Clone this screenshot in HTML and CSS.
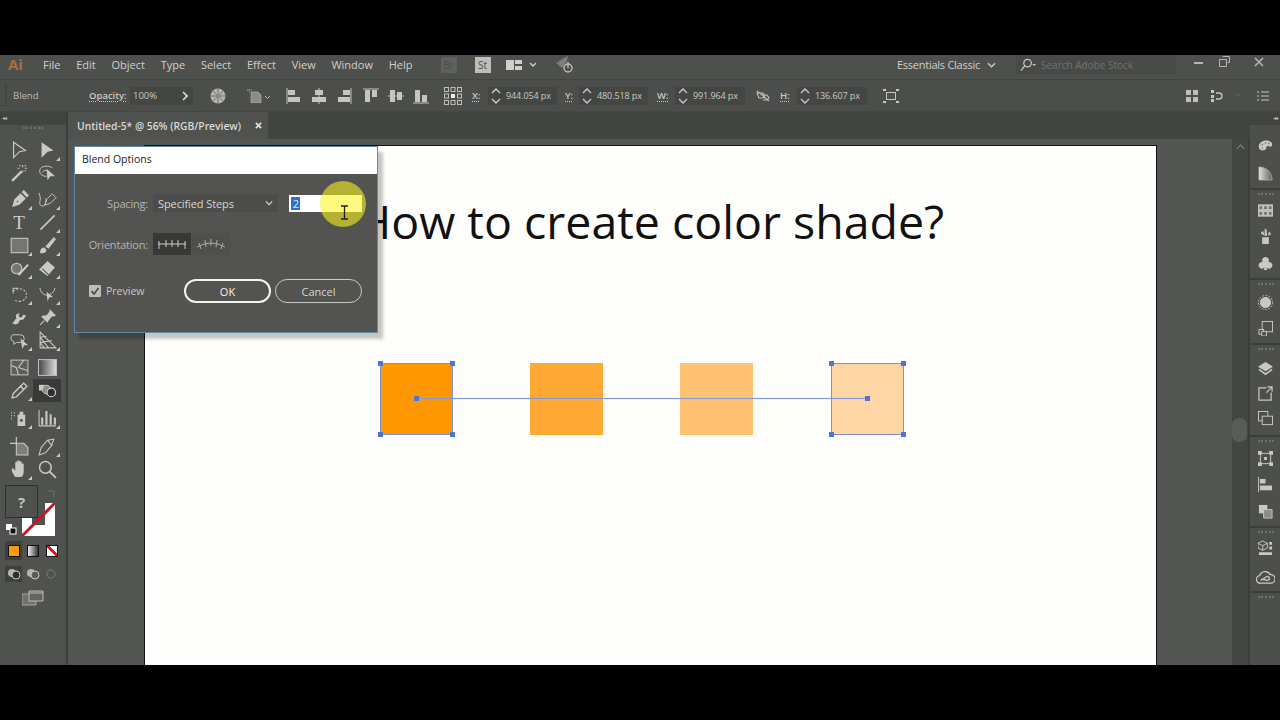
FILE: index.html
```html
<!DOCTYPE html>
<html lang="en">
<head>
<meta charset="utf-8">
<title>Adobe Illustrator - Blend Options</title>
<link rel="stylesheet" href="styles.css">
</head>
<body>
<div class="letterbox"></div>
<div class="app">
  <header class="menubar">
    <div class="logo">Ai</div>
    <nav class="menus">
      <span>File</span><span>Edit</span><span>Object</span><span>Type</span><span>Select</span><span>Effect</span><span>View</span><span>Window</span><span>Help</span>
    </nav>
    <div class="bridge">
      <span class="br">Br</span><span class="st">St</span>
      <svg class="arr" viewBox="0 0 30 12" width="30" height="12"><path d="M0 1h8v10H0zM9 1h7v4H9zM9 7h7v4H9z" fill="#cfcfcb"/><path d="M25 4l3 3 3-3" transform="translate(-1 0)" stroke="#cfcfcb" stroke-width="1.400" fill="none"/></svg>
      <svg class="rocket" viewBox="0 0 20 18" width="20" height="18"><path d="M1 7L9 2l4-2-1 5-5 7z" fill="#7c7e7a"/><circle cx="13" cy="12" r="4" fill="none" stroke="#bdbdb9" stroke-width="1.400"/><path d="M13 6v6" stroke="#bdbdb9" stroke-width="1.400"/></svg>
    </div>
    <div class="spacer"></div>
    <div class="workspace-name">Essentials Classic <svg viewBox="0 0 10 6" width="9" height="6"><path d="M1 1l4 4 4-4" stroke="#ccc" stroke-width="1.400" fill="none"/></svg></div>
    <div class="search">
      <svg viewBox="0 0 18 14" width="17" height="14"><circle cx="8" cy="5" r="4" fill="none" stroke="#c8c8c4" stroke-width="1.300"/><path d="M5 8l-4 5" stroke="#c8c8c4" stroke-width="1.400"/><path d="M13 6h4l-2 2z" fill="#c8c8c4"/></svg>
      <span>Search Adobe Stock</span>
    </div>
    <div class="winctl">
      <svg viewBox="0 0 10 10" width="10" height="10"><path d="M0 6h9" stroke="#b4b4b0" stroke-width="2"/></svg>
      <svg class="restore" viewBox="0 0 11 11" width="11" height="11"><path d="M3.500 .5h7v6h-2M.5 3.500h7v7h-7z" fill="none" stroke="#b4b4b0"/></svg>
      <svg class="close" viewBox="0 0 10 10" width="10" height="10"><path d="M1 1l8 8M9 1l-8 8" stroke="#b4b4b0" stroke-width="1.600"/></svg>
    </div>
  </header>

  <div class="controlbar">
    <svg class="grip-v" viewBox="0 0 2 22" width="2" height="22"><path d="M1 0v22" stroke="#3a3c3a" stroke-width="2" stroke-dasharray="1 1"/></svg>
    <span class="blend-label">Blend</span>
    <span class="lbl opacity">Opacity:</span>
    <span class="field opacity-val">100%</span>
    <span class="field chev"><svg viewBox="0 0 6 10" width="6" height="10"><path d="M1 1l4 4-4 4" stroke="#ddd" stroke-width="1.600" fill="none"/></svg></span>
    <svg class="c-globe" viewBox="0 0 16 16" width="16" height="16"><circle cx="8" cy="8" r="7.500" fill="#b4b4b0"/><path d="M8 1v14M1 8h14M3 3l10 10M13 3L3 13" stroke="#70726e"/><circle cx="8" cy="8" r="2" fill="#8c8e8a"/></svg>
    <svg class="c-doc" viewBox="0 0 24 14" width="24" height="14"><path d="M4 3h7l3 3v8H4z" fill="#8a8c88" stroke="#bbb" stroke-width=".6"/><path d="M0 1h5M2 0v4" stroke="#bbb" stroke-width=".8" stroke-dasharray="1 1"/><path d="M18 7l2.500 2.500L23 7" stroke="#bbb" fill="none"/></svg>
    <div class="align-group">
      <svg viewBox="0 0 16 16" width="16" height="16"><path d="M1 0v16" stroke="#c4c4c0"/><path d="M2 2h7v5H2zM2 9h12v5H2z" fill="#c4c4c0"/></svg>
      <svg viewBox="0 0 16 16" width="16" height="16"><path d="M8 0v16" stroke="#c4c4c0"/><path d="M4 2h8v5H4zM1 9h14v5H1z" fill="#c4c4c0"/></svg>
      <svg viewBox="0 0 16 16" width="16" height="16"><path d="M15 0v16" stroke="#c4c4c0"/><path d="M7 2h7v5H7zM2 9h12v5H2z" fill="#c4c4c0"/></svg>
      <svg class="gap" viewBox="0 0 16 16" width="16" height="16"><path d="M0 1h16" stroke="#c4c4c0"/><path d="M2 2h5v12H2zM9 2h5v7H9z" fill="#c4c4c0"/></svg>
      <svg viewBox="0 0 16 16" width="16" height="16"><path d="M0 8h16" stroke="#c4c4c0"/><path d="M2 2h5v12H2zM9 4h5v8H9z" fill="#c4c4c0"/></svg>
      <svg viewBox="0 0 16 16" width="16" height="16"><path d="M0 15h16" stroke="#c4c4c0"/><path d="M2 2h5v12H2zM9 7h5v7H9z" fill="#c4c4c0"/></svg>
    </div>
    <svg class="c-ref" viewBox="0 0 18 18" width="18" height="18"><g fill="none" stroke="#bdbdb9"><rect x=".5" y=".5" width="4" height="4"/><rect x="7" y=".5" width="4" height="4"/><rect x="13.500" y=".5" width="4" height="4"/><rect x=".5" y="7" width="4" height="4"/><rect x="13.500" y="7" width="4" height="4"/><rect x=".5" y="13.500" width="4" height="4"/><rect x="7" y="13.500" width="4" height="4"/><rect x="13.500" y="13.500" width="4" height="4"/></g><rect x="7" y="7" width="4" height="4" fill="#eee"/></svg>
    <span class="lbl axis x">X:</span>
    <span class="spin"><svg viewBox="0 0 10 16" width="10" height="16"><path d="M1 5l4-4 4 4M1 11l4 4 4-4" stroke="#ccc" stroke-width="1.300" fill="none"/></svg></span>
    <span class="field num">944.054 px</span>
    <span class="lbl axis y">Y:</span>
    <span class="spin"><svg viewBox="0 0 10 16" width="10" height="16"><path d="M1 5l4-4 4 4M1 11l4 4 4-4" stroke="#ccc" stroke-width="1.300" fill="none"/></svg></span>
    <span class="field num">480.518 px</span>
    <span class="lbl axis w">W:</span>
    <span class="spin"><svg viewBox="0 0 10 16" width="10" height="16"><path d="M1 5l4-4 4 4M1 11l4 4 4-4" stroke="#ccc" stroke-width="1.300" fill="none"/></svg></span>
    <span class="field num wide">991.964 px</span>
    <svg class="c-link" viewBox="0 0 14 12" width="14" height="12"><path d="M1 3h6l2 3-2 2H3zM6 5h5l2 3-2 2H7M1 1l12 10" fill="none" stroke="#bdbdb9" stroke-width="1.100"/></svg>
    <span class="lbl axis h">H:</span>
    <span class="spin"><svg viewBox="0 0 10 16" width="10" height="16"><path d="M1 5l4-4 4 4M1 11l4 4 4-4" stroke="#ccc" stroke-width="1.300" fill="none"/></svg></span>
    <span class="field num wide">136.607 px</span>
    <svg class="c-trans" viewBox="0 0 16 14" width="16" height="14"><rect x="3.500" y="3.500" width="9" height="7" fill="none" stroke="#c4c4c0"/><path d="M0 0h3v2H0zM13 0h3v2h-3zM0 12h3v2H0zM13 12h3v2h-3z" fill="#c4c4c0"/></svg>
    <div class="spacer"></div>
    <svg class="c-r1" viewBox="0 0 12 12" width="12" height="12"><path d="M0 0h5v5H0zM7 0h5v5H7zM0 7h5v5H0zM7 7h5v5H7z" fill="#bdbdb9"/></svg>
    <svg class="c-r2" viewBox="0 0 29 12" width="29" height="12"><path d="M0 0h3v3H0zM0 5h3v3H0zM0 9h3v3H0z" fill="#c4c4c0"/><path d="M5 3h3a3 3 0 0 1 0 6H5" fill="none" stroke="#c4c4c0" stroke-width="1.300"/><path d="M24 4l2.500 2.500L29 4" stroke="#686a66" fill="none"/></svg>
    <svg class="c-r3" viewBox="0 0 12 10" width="12" height="10"><path d="M0 1h2M4 1h8M0 5h2M4 5h8M0 9h2M4 9h8" stroke="#c4c4c0" stroke-width="1.200"/></svg>
  </div>

  <div class="workarea">
    <aside class="toolbar">
      <div class="collapse-strip"><span>◂◂</span></div>
      <div class="grip"></div>
      <div class="tools">
        <div class="tool-group">
          <div class="tool"><svg viewBox="0 0 14 16"><path d="M2 1l10 7-5 1-5 5z"/></svg></div>
          <div class="tool more"><svg viewBox="0 0 14 16"><path class="f" d="M2 1l10 7-5 1-5 5z"/></svg></div>
          <div class="tool"><svg viewBox="0 0 18 18"><path d="M2 16L11 7" stroke-width="2.200"/><path d="M12 1v2M12 6v2M9 4h-2M16 4h-2M15 1l-1 1M15 7l-1-1M9 1l1 1"/></svg></div>
          <div class="tool"><svg viewBox="0 0 20 18"><path d="M9 12C4 12 1 9 2 5c1-4 9-5 13-2M5 8c0-2 3-3 5-2"/><path class="f" d="M9 4l9 8-5 0-3 4z"/></svg></div>
        </div>
        <div class="tool-group g3">
          <div class="tool more"><svg viewBox="0 0 18 18"><path class="f" d="M2 16l2-7 6-6 5 5-6 6zM11 2l2-2 5 5-2 2z"/><circle cx="7" cy="11" r="1.200" fill="#4f514f"/></svg></div>
          <div class="tool more"><svg viewBox="0 0 20 18"><path d="M1 2c3 8 0 9 1 12s5 2 6-1 0-5 0-5"/><path d="M7 15l2-6 6-6 4 4-6 6z"/></svg></div>
          <div class="tool"><span class="t-glyph">T</span></div>
          <div class="tool more"><svg viewBox="0 0 16 16"><path d="M2 14L14 2" stroke-width="1.300"/></svg></div>
          <div class="tool more"><svg viewBox="0 0 16 16"><rect x="1" y="2" width="14" height="12" fill="#747672" stroke="#bdbdb9"/></svg></div>
          <div class="tool more"><svg viewBox="0 0 18 18"><path class="f" d="M2 16c0-4 2-5 4-5l2 2c0 3-3 4-6 3zM7 10l8-9 2 2-7 9z"/></svg></div>
          <div class="tool more"><svg viewBox="0 0 20 18"><circle cx="7" cy="9" r="5.500" fill="#747672" stroke="#bdbdb9" stroke-width="1.300"/><path d="M9 16L19 5" stroke="#d0d0cc" stroke-width="2"/></svg></div>
          <div class="tool more"><svg viewBox="0 0 18 18"><path class="f" d="M1 10l8-8 7 6-7 8z"/><path d="M4 9l6 6" stroke="#4f514f"/></svg></div>
        </div>
        <div class="tool-group g3">
          <div class="tool more"><svg viewBox="0 0 18 18"><path d="M3 6a7 6 0 1 1 1 8" stroke-dasharray="2 1.500"/><path d="M3 9V4h5" transform="translate(0 -1)"/></svg></div>
          <div class="tool more"><svg viewBox="0 0 20 18"><path d="M2 2c1 5 3 7 8 8M18 2c-1 4-3 6-6 7"/><path class="f" d="M9 6l7 6-4 0-2 4z"/></svg></div>
          <div class="tool"><svg viewBox="0 0 20 16"><path class="f" d="M2 14c3-1 2-4 5-5-2-3 0-6 3-5l-1 3 3 1 2-3 3 1-3 4-4 1c0 3-3 5-5 4z"/></svg></div>
          <div class="tool more"><svg viewBox="0 0 18 18"><path class="f" d="M11 1l6 6-2 1-2 0-3 4-1 2-6-6 2-1 3 0 3-4zM5 11l-3 5"/><path d="M6 12l-4 4"/></svg></div>
          <div class="tool more"><svg viewBox="0 0 20 18"><path d="M3 3h8q4 0 4 4t-4 4H7l-3 2v-3Q1 9 1 7q0-4 2-4z"/><path class="f" d="M11 7l8 7-4 0-2 4z"/></svg></div>
          <div class="tool more"><svg viewBox="0 0 18 18"><path d="M2 1v15h15L2 1zM2 6l8 10M2 11l4 5M2 6l6-1M2 11l11-2"/></svg></div>
        </div>
        <div class="tool-group g4">
          <div class="tool"><svg viewBox="0 0 18 16"><rect x="1" y="1" width="16" height="14" fill="#5e605c" stroke="#bdbdb9"/><path d="M1 6l5 2 2 7M8 8l5-7M8 8l9 3" stroke="#c8c8c4"/></svg></div>
          <div class="tool"><svg viewBox="0 0 18 16"><defs><linearGradient id="grad"><stop offset="0" stop-color="#444"/><stop offset="1" stop-color="#ddd"/></linearGradient></defs><rect x=".5" y=".5" width="17" height="15" fill="url(#grad)" stroke="#bdbdb9"/></svg></div>
          <div class="tool more"><svg viewBox="0 0 18 18"><path d="M2 16l1-4 7-7 3 3-7 7zM10 5l3-3 3 3-3 3" stroke-width="1.300"/></svg></div>
          <div class="tool active"><svg viewBox="0 0 20 16"><path class="f" d="M1 2h6v6H1z"/><circle cx="9" cy="7" r="4.500" fill="#8a8c88" stroke="#c8c8c4"/><circle cx="14" cy="10" r="4.500" fill="#2f302f" stroke="#c8c8c4" stroke-width="1.300"/></svg></div>
        </div>
        <div class="tool-group g5">
          <div class="tool more"><svg viewBox="0 0 20 18"><path class="f" d="M8 5h8v12H8zM10 2h4v3h-4z"/><circle cx="12" cy="11" r="2" fill="#4f514f"/><path d="M1 3h1M4 3h1M1 6h1M4 6h1M1 9h1" stroke-width="1.400"/></svg></div>
          <div class="tool more"><svg viewBox="0 0 18 16"><path d="M1 0v15h16"/><path class="f" d="M3 7h2v7H3zM7 1h2v13H7zM11 4h2v10h-2zM15 7h2v7h-2z"/></svg></div>
        </div>
        <div class="tool-group g5">
          <div class="tool"><svg viewBox="0 0 18 18"><path class="g" d="M6 6h7l4 4v7H6z"/><path d="M0 6h6M6 0v6" stroke-width="1.100"/></svg></div>
          <div class="tool more"><svg viewBox="0 0 18 18"><path d="M1 17l2-7 6-7 6-1-2 6-6 7zM9 3l4 5"/></svg></div>
          <div class="tool more"><svg viewBox="0 0 18 18"><path class="f" d="M5 16C2 12 1 9 2 8s2 1 3 2V3c0-2 2-2 2 0v4V1c0-1 2-1 2 0v6V2c0-1 2-1 2 0v6V4c0-1 2-1 2 0v7c0 3-1 4-2 5z"/></svg></div>
          <div class="tool"><svg viewBox="0 0 18 18"><circle cx="7" cy="7" r="5.500" stroke-width="1.400"/><path d="M11 11l6 6" stroke-width="1.800"/></svg></div>
        </div>
      </div>

      <div class="fillstroke">
        <div class="stroke-box"><svg viewBox="0 0 33 33" width="33" height="33"><rect x="10" y="0" width="13" height="22" fill="#50524f"/><path d="M0 33L33 0" stroke="#c2182c" stroke-width="3"/></svg></div>
        <div class="fill-box">?</div>
        <svg class="fs-default" viewBox="0 0 12 12" width="12" height="12"><rect x="1" y="1" width="6" height="6" fill="#fff"/><rect x="5" y="5" width="6" height="6" fill="#111" stroke="#fff"/></svg>
        <svg class="fs-swap" viewBox="0 0 10 10" width="10" height="10"><path d="M1 3h6v6" fill="none" stroke="#70726e"/></svg>
      </div>
      <div class="color-row">
        <span class="cbtn on"><i class="c-solid"></i></span>
        <span class="cbtn"><i class="c-gradient"></i></span>
        <span class="cbtn"><i class="c-none"></i></span>
      </div>
      <div class="draw-row">
        <span class="dbtn on"><svg viewBox="0 0 14 12" width="14" height="12"><circle cx="5" cy="5" r="4" fill="#b4b4b0"/><circle cx="9" cy="7" r="4" fill="#2e2f2e" stroke="#c8c8c4"/></svg></span>
        <span class="dbtn"><svg viewBox="0 0 14 12" width="14" height="12"><circle cx="5" cy="5" r="4" fill="#b4b4b0"/><circle cx="9" cy="7" r="4" fill="#5a5c5a" stroke="#c8c8c4"/></svg></span>
        <span class="dbtn"><svg viewBox="0 0 14 12" width="14" height="12"><circle cx="6" cy="6" r="4" fill="none" stroke="#6b6d69" stroke-width="1.500"/></svg></span>
      </div>
      <div class="screen-row"><svg viewBox="0 0 22 16" width="22" height="16"><path d="M0 4h14v11H0z" fill="#70726e" stroke="#a4a4a0"/><path d="M7 1h14v10H7z" fill="#62645f" stroke="#bdbdb9"/><path d="M7 3h14" stroke="#bdbdb9"/></svg></div>
    </aside>

    <main class="center">
      <div class="tabbar">
        <div class="tab"><span>Untitled-5* @ 56% (RGB/Preview)</span><svg viewBox="0 0 8 8" width="7" height="7"><path d="M1 1l6 6M7 1l-6 6" stroke="#e4e4e0" stroke-width="1.800"/></svg></div>
      </div>
      <div class="canvas-row">
        <div class="canvas">
          <div class="artboard">
            <h1 class="headline">How to create color shade?</h1>
            <div class="sq sq1"></div>
            <div class="sq sq2"></div>
            <div class="sq sq3"></div>
            <div class="sq sq4"></div>
            <div class="spine"></div>
            <div class="bbox b1"><i class="tl"></i><i class="tr"></i><i class="bl"></i><i class="br-h"></i><i class="mid"></i></div>
            <div class="bbox b2"><i class="tl"></i><i class="tr"></i><i class="bl"></i><i class="br-h"></i><i class="mid"></i></div>
          </div>
        </div>
        <div class="vscroll"><svg viewBox="0 0 10 6" width="9" height="6"><path d="M1 5l4-4 4 4" stroke="#7c7e7a" stroke-width="1.300" fill="none"/></svg><div class="thumb"></div></div>
      </div>
    </main>

    <aside class="dock">
      <div class="collapse-strip right"><span>◂◂</span></div>
      <section class="dock-group d1">
        <div class="di"><svg viewBox="0 0 18 14"><path class="f" d="M1 8c0-4 4-7 9-7 5 0 7 3 7 5s-2 3-4 2-3 0-3 2-2 3-5 3-4-2-4-5z"/><g fill="#4d4f4d"><circle cx="9" cy="4" r="1.200"/><circle cx="13" cy="4.500" r="1.200"/><circle cx="5" cy="6" r="1.200"/><circle cx="5" cy="10" r="1.200"/></g></svg></div>
        <div class="di"><svg viewBox="0 0 16 16"><defs><linearGradient id="g2" x1="0" x2="1"><stop offset="0" stop-color="#e0e0dc"/><stop offset="1" stop-color="#62645f"/></linearGradient></defs><path d="M1 1v14h14C15 7 9 1 1 1z" fill="url(#g2)" stroke="#bdbdb9" stroke-width=".7"/></svg></div>
      </section>
      <section class="dock-group d2">
        <div class="di"><svg viewBox="0 0 16 12"><rect width="16" height="12" fill="#bdbdb9"/><path d="M1 1h4v4H1zM6 1h4v4H6zM11 1h4v4h-4zM1 7h4v4H1zM6 7h4v4H6zM11 7h4v4h-4z" fill="#70726e"/></svg></div>
        <div class="di"><svg viewBox="0 0 14 18"><path class="f" d="M3 10h8v8H3zM1 5l3-3 2 6zM6 8V0l2 0 1 8zM10 8l1-5 3 3z"/></svg></div>
        <div class="di"><svg viewBox="0 0 16 16"><path class="f" d="M8 1a3.500 3.500 0 0 1 3 5.500A3.500 3.500 0 1 1 9 12l1 3H6l1-3a3.500 3.500 0 1 1-2-5.500A3.500 3.500 0 0 1 8 1z"/></svg></div>
      </section>
      <section class="dock-group d3">
        <div class="di"><svg viewBox="0 0 16 16"><circle cx="8" cy="8" r="5.500" fill="#c8c8c4"/><circle cx="8" cy="8" r="7.500" fill="none" stroke="#c8c8c4" stroke-dasharray="2 1.500"/></svg></div>
        <div class="di"><svg viewBox="0 0 16 16"><rect x="4.500" y=".5" width="11" height="11"/><rect x="1" y="9" width="5" height="5" fill="#4d4f4d"/><rect x="4" y="11" width="5" height="5" fill="#4d4f4d"/></svg></div>
      </section>
      <section class="dock-group d4">
        <div class="di"><svg viewBox="0 0 16 14"><path class="f" d="M8 0l8 5-8 5-8-5z"/><path d="M1 8l7 5 7-5" stroke-width="1.800"/></svg></div>
        <div class="di"><svg viewBox="0 0 16 16"><path d="M9 2H1v13h13V7M9 7l6-6M10 1h5v5" stroke-width="1.300"/></svg></div>
        <div class="di"><svg viewBox="0 0 16 16"><rect x=".5" y=".5" width="10" height="10"/><rect x="4.500" y="5.500" width="11" height="9" fill="#4d4f4d"/></svg></div>
      </section>
      <section class="dock-group d5">
        <div class="di"><svg viewBox="0 0 16 16"><rect x="2.500" y="2.500" width="11" height="11"/><path class="f" d="M0 0h4v4H0zM12 0h4v4h-4zM0 12h4v4H0zM12 12h4v4h-4zM6.500 6.500h3v3h-3z"/></svg></div>
        <div class="di"><svg viewBox="0 0 16 16"><path d="M.5 0v16"/><path class="f" d="M2 2h6v5H2zM2 9h13v5H2z"/></svg></div>
        <div class="di"><svg viewBox="0 0 16 16"><path class="f" d="M1 1h9v9H1z"/><path d="M6 6h9v9H6z" fill="#8a8c88"/></svg></div>
      </section>
      <section class="dock-group d6">
        <div class="di"><svg viewBox="0 0 16 16"><path d="M5 1l5 2.500v5L5 11 0 8.500v-5zM0 3.500L5 6l5-2.500M5 6v5"/><path class="f" d="M12 2h3v3h-3zM12 7h3v3h-3zM1 13h14v3H1z"/></svg></div>
        <div class="di wide"><svg viewBox="0 0 20 14"><path d="M5 13a4 4 0 0 1-1-8 6 6 0 0 1 11-1 4.500 4.500 0 0 1 1 9zM5 10c2-3 5 0 7 0s3-3 1-4-4 2-6 3" stroke-width="1.400"/></svg></div>
      </section>
      <section class="dock-group last"></section>
    </aside>
  </div>

  <section class="dialog">
    <div class="dlg-title">Blend Options</div>
    <div class="dlg-body">
      <div class="dlg-row spacing">
        <label class="dlg-label">Spacing:</label>
        <div class="select"><span>Specified Steps</span><svg viewBox="0 0 10 6" width="8" height="6"><path d="M1 1l4 4 4-4" stroke="#ddd" stroke-width="1.400" fill="none"/></svg></div>
        <div class="steps"><span class="sel">2</span></div>
      </div>
      <div class="dlg-row orient">
        <label class="dlg-label">Orientation:</label>
        <span class="obtn on"><svg viewBox="0 0 30 12" width="30" height="12"><path d="M1 6h28M2 3v8M9 2v7M15 2v7M21 2v7M28 3v8" stroke="#ccc" fill="none"/></svg></span>
        <span class="obtn"><svg viewBox="0 0 30 12" width="30" height="12"><path d="M1 9Q15 1 29 9M3 5l2 6M9 2l1 7M15 1v7M21 2l-1 7M27 5l-2 6" stroke="#aaa" fill="none"/></svg></span>
      </div>
      <div class="dlg-row actions">
        <span class="check"><svg viewBox="0 0 12 12" width="12" height="12"><rect width="12" height="12" rx="1" fill="#bcbcb8"/><path d="M2.500 6l2.500 3 4.500-6" stroke="#454543" stroke-width="1.500" fill="none"/></svg></span>
        <span class="preview">Preview</span>
        <button class="btn primary">OK</button>
        <button class="btn">Cancel</button>
      </div>
    </div>
  </section>
  <div class="highlight"></div>
  <svg class="ibeam" viewBox="0 0 9 15" width="9" height="15"><path d="M1 1h7M1 14h7M4.500 1v13" stroke="#222" stroke-width="1.300" fill="none"/></svg>
</div>
<div class="letterbox"></div>
</body>
</html>
```
FILE: styles.css
```css
* { box-sizing: border-box; }
html, body { margin: 0; padding: 0; width: 1280px; height: 720px; overflow: hidden; background: #000; }
body { display: flex; flex-direction: column; font-family: "Open Sans", "Liberation Sans", sans-serif; color: #d6d6d2; }
.letterbox { height: 55px; background: #000; flex: none; }
.app { position: relative; height: 610px; flex: none; display: flex; flex-direction: column; background: #4f514f; overflow: hidden; }
.spacer { flex: 1; }

/* Menu bar */
.menubar { height: 25px; flex: none; display: flex; align-items: center; padding-bottom: 5px; background: #4e504e; border-bottom: 1px solid #434543; font-size: 11px; color: #cfcfcb; }
.logo { width: 43px; padding-left: 8px; font-size: 15px; font-weight: 700; color: #a5713f; line-height: 19px; height: 19px; }
.menus { display: flex; gap: 15.750px; }
.bridge { display: flex; align-items: center; margin-left: 28px; }
.br, .st { width: 16px; height: 16px; display: flex; align-items: center; justify-content: center; font-size: 10px; }
.br { background: #5f615d; color: #4b4d4b; }
.st { margin-left: 18px; background: #bdbdb9; color: #4b4d4b; }
.arr { margin-left: 15px; }
.rocket { margin-left: 19px; }
.workspace-name { display: flex; align-items: center; gap: 7px; font-size: 11px; letter-spacing: -.25px; margin-right: 20px; }
.search { width: 160px; height: 19px; margin-right: 15px; background: #484a48; display: flex; align-items: center; padding-left: 4px; gap: 4px; font-size: 10px; color: #70726e; }
.winctl { width: 89px; height: 14px; display: flex; align-items: center; padding-left: 3px; margin-bottom: 6px; }
.restore { margin-left: 15px; }
.close { margin-left: 24px; }

/* Control bar */
.controlbar { height: 32px; flex: none; display: flex; align-items: center; background: #4c4e4c; font-size: 9.500px; color: #c8c8c4; padding-left: 5px; border-bottom: 1px solid #454745; }
.blend-label { margin-left: 6px; color: #b8b8b4; width: 28px; }
.lbl { text-decoration: underline dotted; text-underline-offset: 2px; }
.opacity { margin-left: 48px; width: 41px; font-weight: 600; }
.field { height: 18px; background: #444644; display: flex; align-items: center; }
.opacity-val { width: 47px; padding-left: 3px; }
.chev { width: 16px; justify-content: center; }
.c-globe { margin-left: 17px; }
.c-doc { margin-left: 21px; }
.align-group { margin-left: 15px; display: flex; gap: 9px; }
.align-group .gap { margin-left: 2px; }
.c-ref { margin-left: 15px; }
.axis { font-weight: 600; }
.x { margin-left: 10px; width: 16px; }
.y { margin-left: 8px; width: 14px; }
.w { margin-left: 9px; width: 18px; }
.h { margin-left: 10px; width: 17px; }
.spin { width: 16px; height: 18px; display: flex; align-items: center; justify-content: center; background: #444644; }
.num { width: 53px; padding-left: 2px; white-space: nowrap; overflow: hidden; font-size: 9px; letter-spacing: -.1px; }
.num.wide { width: 54px; }
.c-link { margin-left: 11px; }
.c-trans { margin-left: 16px; }
.c-r1 { margin-right: 13px; }
.c-r2 { margin-right: 17px; }
.c-r3 { margin-right: 11px; }

/* Workarea */
.workarea { flex: 1; min-height: 0; display: flex; }
.toolbar { width: 68px; flex: none; background: #50524f; border-right: 2px solid #3c3e3c; display: flex; flex-direction: column; align-items: stretch; }
.collapse-strip { height: 13px; background: #424442; font-size: 6px; color: #b8b8b4; padding-left: 2px; line-height: 13px; letter-spacing: -1px; }
.grip { height: 2px; width: 20px; margin: 2px 0 -2px 23px; border-top: 2px dotted #6e706c; }
.tools { padding-left: 5px; padding-top: 12px; height: 358px; flex: none; }
.tool-group { display: grid; grid-template-columns: 28px 28px; grid-auto-rows: 23px; }
.g3 { margin-top: 3px; }
.g4 { margin-top: 4px; }
.g5 { margin-top: 5px; }
.tool { position: relative; display: flex; align-items: center; justify-content: center; }
.tool svg { width: 19px; height: 19px; fill: none; stroke: #c8c8c4; stroke-width: 1; }
.tool svg .f { fill: #c8c8c4; stroke: none; }
.tool svg .g { fill: #7c7e7a; }
.tool.more::after { content: ""; position: absolute; right: 1px; bottom: 1px; border-style: solid; border-width: 0 0 4px 4px; border-color: transparent transparent #c8c8c4 transparent; }
.tool.active { background: #383a38; }
.t-glyph { font-family: "Liberation Serif", serif; font-size: 19px; color: #d0d0cc; line-height: 1; }

.fillstroke { position: relative; height: 56px; flex: none; margin-top: 0; }
.fill-box { position: absolute; left: 5px; top: 0; width: 33px; height: 33px; background: #4f514f; border: 1px solid #2e302e; display: flex; align-items: center; justify-content: center; font-size: 15px; font-weight: 700; color: #c4c4c0; }
.stroke-box { position: absolute; left: 22px; top: 18px; width: 33px; height: 33px; background: #fff; overflow: hidden; }
.stroke-box svg { display: block; }
.fs-default { position: absolute; left: 5px; top: 38px; }
.fs-swap { position: absolute; left: 47px; top: 3px; }
.color-row { display: flex; gap: 2px; padding-left: 5px; height: 19px; flex: none; }
.cbtn { width: 17px; height: 19px; display: flex; align-items: center; justify-content: center; }
.cbtn.on { background: #3e403e; }
.cbtn i { display: block; width: 12px; height: 12px; border: 1px solid #111; }
.c-solid { background: #ff9a10; }
.c-gradient { background: linear-gradient(90deg, #eee, #333); }
.c-none { background-image: linear-gradient(135deg, #fff 40%, #d11a2a 40%, #d11a2a 60%, #fff 60%); transform: scaleX(-1); }
.draw-row { display: flex; gap: 2px; padding-left: 5px; margin-top: 6px; height: 16px; flex: none; }
.dbtn { width: 17px; height: 16px; display: flex; align-items: center; justify-content: center; }
.dbtn.on { background: #3e403e; }
.screen-row { padding-left: 22px; margin-top: 8px; flex: none; }
.screen-row svg { display: block; }

/* Center */
.center { flex: 1; min-width: 0; display: flex; flex-direction: column; }
.tabbar { height: 27px; flex: none; background: #424442; }
.tab { width: 200px; height: 27px; background: #50524f; display: flex; align-items: center; justify-content: space-between; padding: 0 6px 0 9px; font-size: 10.300px; font-weight: 600; color: #d8d8d4; white-space: nowrap; }
.canvas-row { flex: 1; min-height: 0; display: flex; background: #545653; }
.canvas { position: relative; flex: 1; min-width: 0; overflow: hidden; }
.vscroll { width: 18px; flex: none; background: #444644; border-right: 2px solid #3c3e3c; position: relative; display: flex; justify-content: center; padding-top: 5px; }
.vscroll svg { flex: none; }
.thumb { position: absolute; left: 0; top: 279px; width: 15px; height: 24px; border-radius: 7px; background: #5a5c59; }
.artboard { position: absolute; left: 76px; top: 6px; width: 1013px; height: 530px; background: #fdfefc; border: 1px solid #111; }
.headline { position: absolute; left: 212px; top: 45px; margin: 0; font-size: 46.500px; line-height: 60px; font-weight: 400; color: #111; white-space: nowrap; font-family: "Open Sans", sans-serif; letter-spacing: 0; }
.sq { position: absolute; top: 217px; width: 73px; height: 72px; }
.sq1 { left: 235px; background: #ff9700; }
.sq2 { left: 385px; background: #ffa833; }
.sq3 { left: 535px; background: #ffc272; }
.sq4 { left: 686px; background: #fed6a5; }
.spine { position: absolute; left: 270px; top: 252px; width: 452px; height: 1px; background: #8598d8; box-shadow: 0 0 1px #8598d8; }
.bbox { position: absolute; top: 217px; width: 73px; height: 72px; border: 1px solid #7f90cc; }
.b1 { left: 235px; }
.b2 { left: 686px; }
.bbox i { position: absolute; width: 5px; height: 5px; background: #4f74d8; }
.tl { left: -3px; top: -3px; }
.tr { right: -3px; top: -3px; }
.bl { left: -3px; bottom: -3px; }
.br-h { right: -3px; bottom: -3px; }
.mid { left: 33px; top: 32px; }

/* Dock */
.dock { width: 30px; flex: none; background: #4d4f4d; display: flex; flex-direction: column; }
.dock .collapse-strip { height: 13px; text-align: right; padding-right: 3px; }
.dock-group { border-bottom: 2px solid #3c3e3c; padding: 11px 0 6px; display: flex; flex-direction: column; align-items: center; gap: 8.500px; position: relative; }
.dock-group::before { content: ""; position: absolute; top: 3px; left: 8px; width: 16px; border-top: 2px dotted #6e706c; }
.d1 { gap: 10px; }
.d1::before { display: none; }
.d3 { padding-top: 13px; gap: 8px; }
.d4 { padding: 14px 0 8px; gap: 7px; }
.d5 { padding-top: 12px; }
.d6 { padding: 10px 0 5px; gap: 12px; }
.dock-group.last { border: 0; padding: 5px 0 0; }
.di { height: 18px; display: flex; align-items: center; justify-content: center; }
.di svg { width: 15px; height: 15px; fill: none; stroke: #c8c8c4; stroke-width: 1; }
.di.wide svg { width: 19px; }
.di svg .f { fill: #c8c8c4; stroke: none; }

/* Dialog */
.dialog { position: absolute; left: 74px; top: 91px; width: 304px; height: 187px; background: #535351; border: 1px solid #5c8aa8; box-shadow: 5px 6px 3px rgba(0, 0, 0, .22); display: flex; flex-direction: column; }
.dlg-title { height: 27px; flex: none; background: #fff; color: #222; font-size: 10.500px; display: flex; align-items: center; padding: 0 0 3px 7px; }
.dlg-body { flex: 1; padding: 20px 15px 0 0; font-size: 11px; color: #b4b4b0; }
.dlg-row { display: flex; align-items: center; }
.dlg-label { width: 73px; text-align: right; flex: none; letter-spacing: -.2px; }
.spacing { height: 18px; }
.select { width: 126px; height: 18px; margin-left: 5px; background: #4c4c4a; color: #d6d6d2; display: flex; align-items: center; justify-content: space-between; padding: 0 5px 0 5px; letter-spacing: -.1px; }
.steps { width: 73px; height: 17px; margin-left: 11px; background: #fff; padding-left: 2px; display: flex; align-items: center; }
.sel { background: #2f6fd0; color: #dfe8f8; width: 9px; height: 13px; display: flex; align-items: center; justify-content: center; line-height: 1; }
.orient { margin-top: 21px; height: 22px; }
.obtn { width: 38px; height: 22px; display: flex; align-items: center; justify-content: center; margin-left: 1px; background: #4f4f4d; }
.obtn.on { margin-left: 5px; background: #383836; }
.actions { margin-top: 24px; padding-left: 14px; height: 24px; }
.check { width: 12px; height: 12px; flex: none; display: block; }
.check svg { display: block; }
.preview { margin-left: 5px; width: 78px; color: #c8c8c4; font-size: 10.500px; }
.btn { width: 87px; height: 24px; font: inherit; background: transparent; color: #d6d6d2; border: 1px solid #c8c8c4; border-radius: 12px; padding: 0; margin-right: 4px; }
.btn:last-child { margin-right: 0; }
.btn.primary { border: 2px solid #f2f2ee; color: #f2f2ee; }

.highlight { position: absolute; left: 320px; top: 126px; width: 46px; height: 46px; border-radius: 50%; background: rgba(250, 245, 30, .58); }
.ibeam { position: absolute; left: 340px; top: 150px; }
```
